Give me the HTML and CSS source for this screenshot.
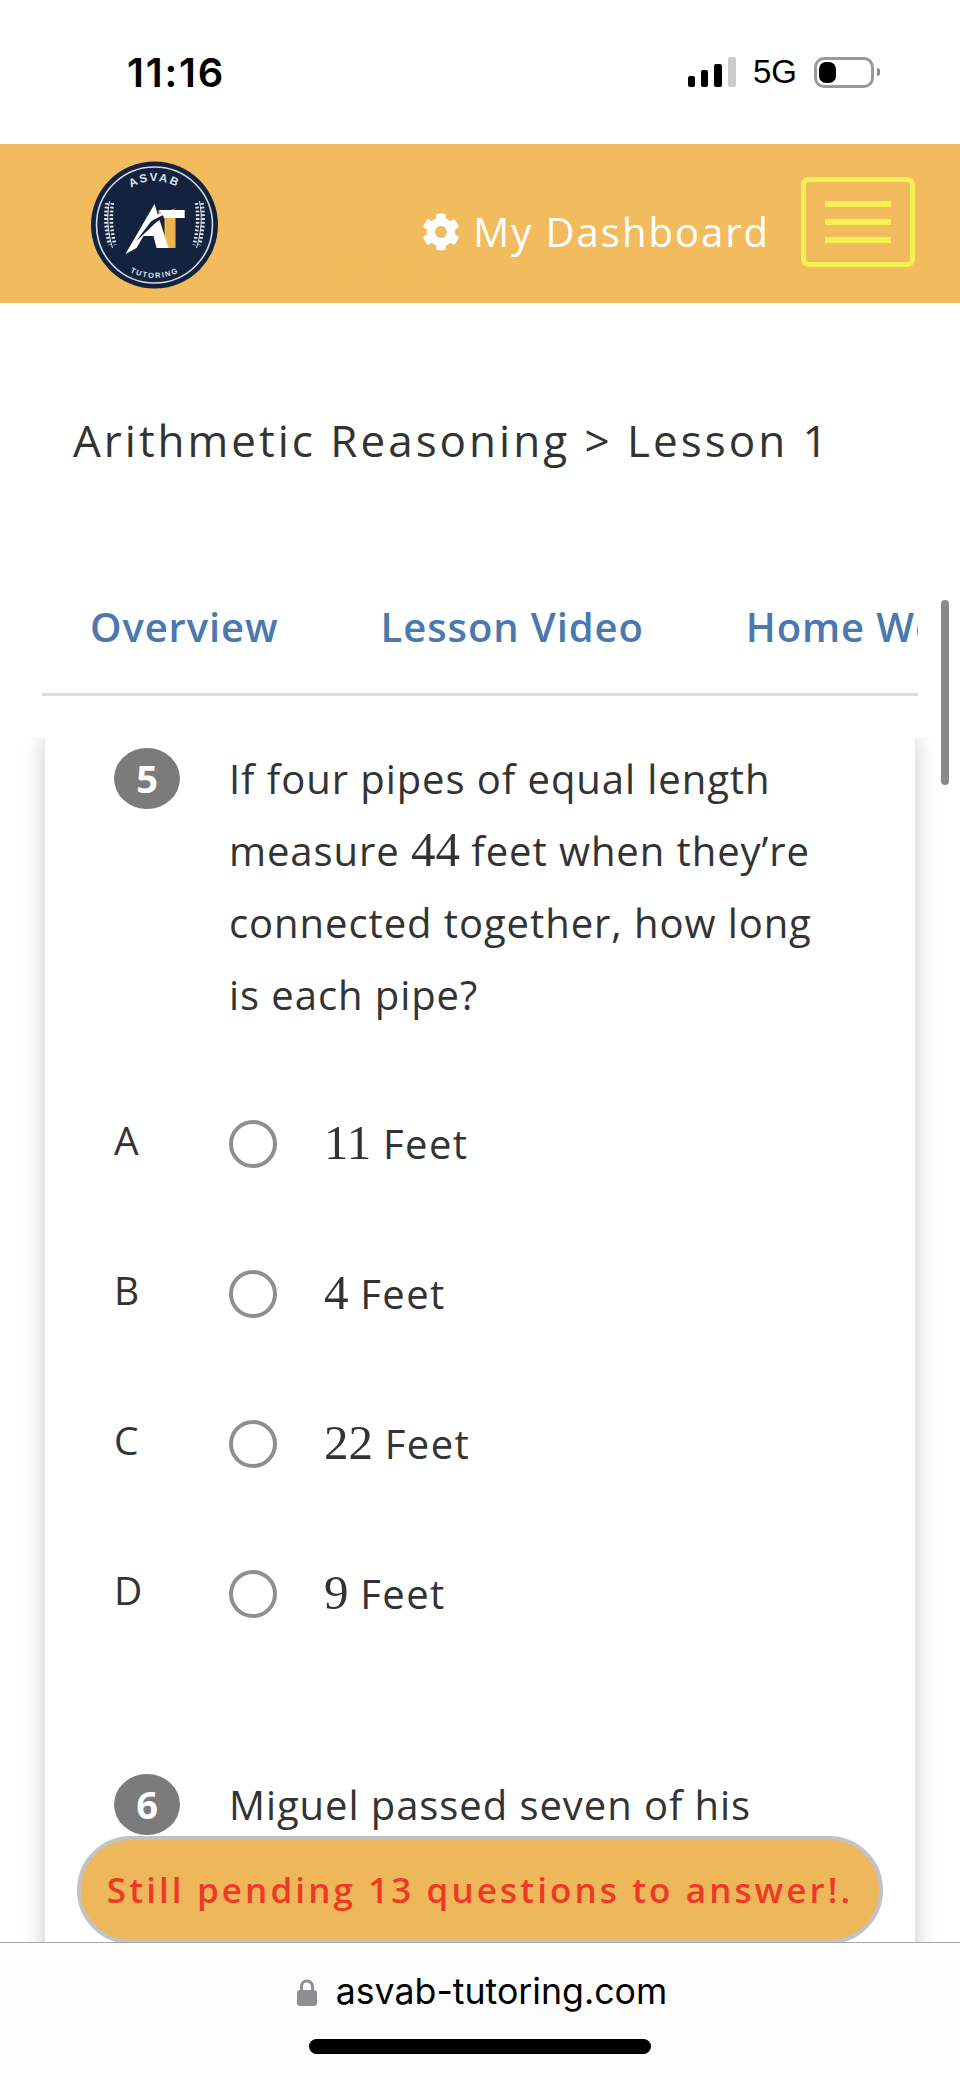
FILE: index.html
```html
<!DOCTYPE html>
<html lang="en">
<head>
<meta charset="utf-8">
<title>Arithmetic Reasoning - Lesson 1</title>
<link rel="stylesheet" href="styles.css">
</head>
<body>
<div class="phone">
  <div class="status">
    <span class="clock">11:16</span>
    <div class="status-right">
      <div class="signal"><i class="s1"></i><i class="s2"></i><i class="s3"></i><i class="s4"></i></div>
      <span class="net">5G</span>
      <div class="battery"><i></i></div>
      <div class="nub"></div>
    </div>
  </div>

  <header class="topbar">
    <svg class="logo" viewBox="0 0 128 128" aria-label="ASVAB Tutoring">
      <defs>
        <path id="arcTop" d="M20 64a44 44 0 0 1 88 0"/>
        <path id="arcBot" d="M11 64a53 53 0 0 0 106 0"/>
      </defs>
      <circle cx="64" cy="64" r="63.500" fill="#13233f"/>
      <circle cx="64" cy="64" r="58" fill="none" stroke="#d5dbe4" stroke-width="1.600"/>
      <text class="logo-small" text-anchor="middle"><textPath href="#arcTop" startOffset="50%">ASVAB</textPath></text>
      <text class="logo-small logo-bot" text-anchor="middle"><textPath href="#arcBot" startOffset="50%">TUTORING</textPath></text>
      <g fill="none" stroke="#e4e7ec">
        <path stroke-width="1" d="M19 40c-3 15-2 31 3 47"/>
        <path stroke-width="1" d="M109 40c3 15 2 31-3 47"/>
        <path stroke-width="3.500" stroke-dasharray="1.800 2" d="M16.500 42c-2 13-1.500 27 2.500 42"/>
        <path stroke-width="3.500" stroke-dasharray="1.800 2" d="M22 42c-2 13-1.500 27 2.500 42"/>
        <path stroke-width="3.500" stroke-dasharray="1.800 2" d="M111.500 42c2 13 1.500 27-2.500 42"/>
        <path stroke-width="3.500" stroke-dasharray="1.800 2" d="M106 42c2 13 1.500 27-2.500 42"/>
      </g>
      <path d="M68 49h26v8H85v30H74V57h-6z" fill="#efb54d"/>
      <path d="M64 43 78 87H66L63 75H53L46 87 35 93z" fill="#fff"/>
      <path d="M46 80 60 58l26-10-20 13z" fill="#13233f"/>
      <path d="M36 92 58 57 86 47 61 60z" fill="#fff"/>
      <path d="M69 49h25v8H74z" fill="#fff"/>
    </svg>
    <span class="ghost"><i></i>$148.81</span>
    <a class="dash">
      <svg class="gear" viewBox="0 0 512 512"><path d="M487.400 315.700l-42.600-24.600c4.300-23.200 4.300-47 0-70.200l42.600-24.600c4.900-2.800 7.100-8.600 5.500-14-11.100-35.600-30-67.800-54.700-94.600-3.800-4.100-10-5.100-14.800-2.300L380.800 110c-17.900-15.400-38.500-27.300-60.800-35.100V25.800c0-5.600-3.900-10.500-9.400-11.700-36.700-8.200-74.300-7.800-109.200 0-5.500 1.200-9.400 6.100-9.400 11.700V75c-22.200 7.900-42.800 19.800-60.800 35.100L88.700 85.500c-4.900-2.800-11-1.900-14.800 2.300-24.700 26.700-43.600 58.900-54.700 94.600-1.700 5.400.6 11.200 5.500 14L67.300 221c-4.300 23.200-4.300 47 0 70.200l-42.600 24.600c-4.900 2.800-7.100 8.600-5.500 14 11.100 35.600 30 67.800 54.700 94.600 3.800 4.100 10 5.100 14.800 2.300l42.600-24.600c17.900 15.400 38.500 27.300 60.800 35.100v49.200c0 5.600 3.900 10.500 9.400 11.700 36.700 8.200 74.300 7.800 109.200 0 5.500-1.200 9.400-6.100 9.400-11.700v-49.200c22.200-7.900 42.800-19.800 60.800-35.100l42.600 24.600c4.900 2.800 11 1.900 14.800-2.300 24.700-26.700 43.600-58.900 54.700-94.600 1.500-5.500-.7-11.300-5.600-14.100zM256 336c-44.100 0-80-35.900-80-80s35.900-80 80-80 80 35.900 80 80-35.900 80-80 80z"/></svg>
      My Dashboard
    </a>
    <button class="burger" aria-label="Menu"><i></i><i></i><i></i></button>
  </header>

  <h1 class="crumb">Arithmetic Reasoning &gt; Lesson 1</h1>

  <nav class="tabs">
    <a class="tab">Overview</a>
    <a class="tab">Lesson Video</a>
    <a class="tab">Home Work</a>
  </nav>

  <main class="viewport">
    <div class="card">
      <section class="question">
        <span class="badge">5</span>
        <p class="qtext">If four pipes of equal length measure <span class="num">44</span> feet when they’re connected together, how long is each pipe?</p>
      </section>
      <ul class="options">
        <li class="option"><span class="letter">A</span><span class="radio"></span><span class="answer"><span class="num">11</span> Feet</span></li>
        <li class="option"><span class="letter">B</span><span class="radio"></span><span class="answer"><span class="num">4</span> Feet</span></li>
        <li class="option"><span class="letter">C</span><span class="radio"></span><span class="answer"><span class="num">22</span> Feet</span></li>
        <li class="option"><span class="letter">D</span><span class="radio"></span><span class="answer"><span class="num">9</span> Feet</span></li>
      </ul>
      <section class="question next">
        <span class="badge">6</span>
        <p class="qtext">Miguel passed seven of his</p>
      </section>
    </div>
  </main>

  <div class="scrollbar"></div>
  <div class="pending">Still pending 13 questions to answer!.</div>

  <footer class="urlbar">
    <div class="url">
      <svg class="lock" viewBox="0 0 20 27"><path fill="none" stroke="#8e8e93" stroke-width="3" d="M4.500 13V7.500a5.500 5.500 0 0 1 11 0V13"/><rect x="0" y="11" width="20" height="16" rx="3" fill="#8e8e93"/></svg>
      <span>asvab-tutoring.com</span>
    </div>
    <div class="home"></div>
  </footer>
</div>
</body>
</html>
```
FILE: styles.css
```css
* { box-sizing: border-box; }
html, body { margin: 0; padding: 0; background: #fff; }
.phone {
  position: relative;
  width: 960px;
  height: 2079px;
  overflow: hidden;
  display: flex;
  flex-direction: column;
  font-family: "Open Sans", "Liberation Sans", sans-serif;
  color: #333;
}

/* status bar */
.status {
  height: 144px;
  flex: none;
  display: flex;
  justify-content: space-between;
  align-items: center;
  padding: 0 80px 0 127px;
  color: #000;
  font-family: Inter, "Liberation Sans", sans-serif;
}
.clock { font-size: 40px; font-weight: 600; letter-spacing: 1.800px; }
.status-right { display: flex; align-items: center; }
.signal { display: flex; align-items: flex-end; gap: 6px; height: 30px; }
.signal i { display: block; width: 7px; background: #000; border-radius: 2px; }
.signal .s1 { height: 11px; }
.signal .s2 { height: 17px; }
.signal .s3 { height: 23px; width: 8px; }
.signal .s4 { height: 30px; width: 8px; background: #ccc; }
.net { font-size: 33px; font-weight: 400; margin-left: 17px; font-family: "Liberation Sans", sans-serif; }
.battery {
  width: 60px; height: 31px; margin-left: 17px; padding: 2px 0 0 2px;
  border: 3px solid #999; border-radius: 10px;
}
.battery i { display: block; width: 17px; height: 21px; background: #000; border-radius: 7px; }
.nub { width: 3px; height: 8px; margin-left: 3px; background: #888; border-radius: 0 3px 3px 0; }

/* header */
.topbar {
  position: relative;
  height: 159px;
  flex: none;
  background: #f2bc5e;
  display: flex;
  align-items: center;
  padding: 0 45px 0 90px;
}
.logo { width: 129px; height: 128px; flex: none; margin-top: 2px; }
.logo-small { font: 700 11.500px "Liberation Sans", sans-serif; fill: #dfe4ea; letter-spacing: 2px; }
.logo-bot { font-size: 7.500px; letter-spacing: 1.500px; }
.ghost {
  position: absolute; left: 232px; top: 99px;
  display: flex; align-items: center; gap: 55px;
  font: 400 46px "Liberation Serif", serif;
  color: #f1bb5c;
}
.ghost i { width: 43px; height: 48px; border: 2px solid #f1bb5c; border-radius: 50%; }
.dash {
  margin-left: auto;
  margin-top: 16px;
  display: flex;
  align-items: center;
  gap: 13px;
  color: #fff;
  font-size: 40px;
  letter-spacing: 2px;
}
.gear { width: 38px; height: 38px; fill: #fff; flex: none; }
.burger {
  width: 114px; height: 90px; margin-left: 31px; margin-top: -4px; padding: 0;
  background: none;
  border: 5px solid #f8ef52;
  border-radius: 8px;
  display: flex; flex-direction: column; align-items: center; justify-content: center; gap: 12px;
}
.burger i { display: block; width: 66px; height: 6px; background: #f8ef52; }

/* breadcrumb */
.crumb {
  margin: 0;
  height: 223px;
  flex: none;
  padding: 109px 0 0 73px;
  font-size: 44px;
  line-height: 56px;
  font-weight: 400;
  letter-spacing: 3px;
  color: #333;
}

/* tabs */
.tabs {
  height: 170px;
  flex: none;
  margin: 0 42px;
  padding: 76px 0 0 48px;
  display: flex;
  gap: 102px;
  white-space: nowrap;
  overflow: hidden;
  border-bottom: 3px solid #ddd;
  font-size: 40px;
  line-height: 50px;
  font-weight: 600;
  letter-spacing: .9px;
  color: #4a79b0;
}

/* scrolling card */
.viewport {
  flex: 1;
  margin-top: 42px;
  overflow: hidden;
}
.card {
  margin: 0 45px;
  height: 1400px;
  padding: 6px 80px 0 69px;
  background: #fff;
  box-shadow: 0 0 22px rgba(0, 0, 0, .22);
}
.question { display: flex; gap: 49px; }
.question.next { margin-top: 101px; }
.badge {
  width: 66px; height: 61px; flex: none; margin-top: 4px;
  border-radius: 50%;
  background: #7b7b7b;
  color: #fff;
  font-size: 38px;
  font-weight: 700;
  line-height: 61px;
  text-align: center;
}
.qtext {
  margin: -1px 0 0;
  font-size: 40px;
  line-height: 72px;
  letter-spacing: .930px;
  color: #333;
}
.num { font-family: "Liberation Serif", serif; font-size: 49px; line-height: 40px; letter-spacing: 0; }
.options { list-style: none; margin: 38px 0 0; padding: 0; }
.option { height: 150px; display: flex; align-items: center; }
.letter { width: 115px; flex: none; font-size: 39px; margin-top: -9px; }
.radio {
  width: 48px; height: 48px; flex: none;
  border: 4px solid #8e8e93;
  border-radius: 50%;
  background: #fff;
}
.answer { margin: -2px 0 0 47px; font-size: 40px; letter-spacing: 1.400px; }

.scrollbar {
  position: absolute; left: 941px; top: 600px;
  width: 8px; height: 185px;
  background: #8a8a8a; border-radius: 4px;
}
.pending {
  position: absolute; left: 77px; top: 1836px;
  width: 806px; height: 108px;
  background: #eeb75b;
  border: 4px solid #c2c2c2;
  border-radius: 54px;
  text-align: center;
  color: #ee3a24;
  font-size: 35px;
  font-weight: 600;
  line-height: 100px;
  letter-spacing: 3.100px;
  white-space: nowrap;
}

/* Safari bottom bar */
.urlbar {
  position: absolute; left: 0; right: 0; bottom: 0;
  height: 137px;
  background: #fcfcfc;
  border-top: 1px solid #a8a8a8;
  display: flex; flex-direction: column; align-items: center;
}
.url {
  display: flex; align-items: center; gap: 19px;
  margin-top: 24px; height: 48px; padding-left: 4px;
  color: #000;
  font-family: Inter, "Liberation Sans", sans-serif;
  font-size: 35.700px;
}
.lock { width: 20px; height: 27px; flex: none; margin-top: 2px; }
.home { width: 342px; height: 15px; margin-top: 24px; background: #000; border-radius: 8px; }
```
